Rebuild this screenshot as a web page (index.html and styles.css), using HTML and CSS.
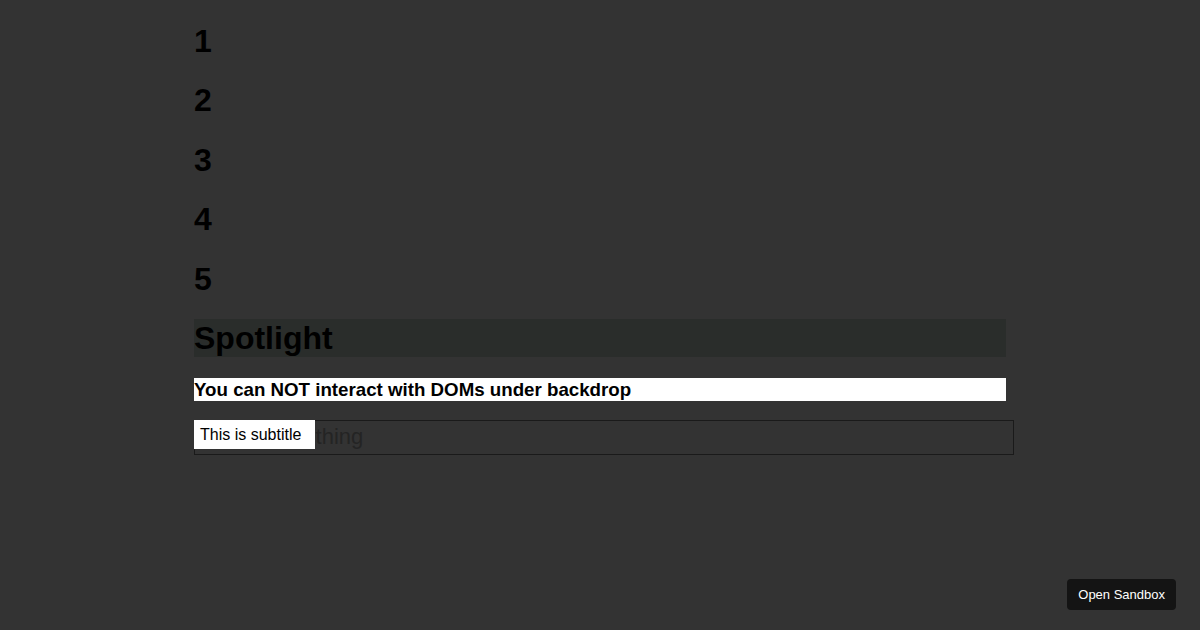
FILE: index.html
```html
<!DOCTYPE html>
<html>
<head>
<meta charset="utf-8">
<link rel="stylesheet" href="styles.css">
</head>
<body>
<div class="page">
  <h1 class="num">1</h1>
  <h1 class="num">2</h1>
  <h1 class="num">3</h1>
  <h1 class="num">4</h1>
  <h1 class="num">5</h1>
  <h1 class="spot">Spotlight</h1>
  <h3 class="note">You can NOT interact with DOMs under backdrop</h3>
  <div class="field">
    <input class="input" type="text" placeholder="Type something">
    <div class="subtitle">This is subtitle</div>
  </div>
</div>
<button class="sandbox">Open Sandbox</button>
</body>
</html>
```

FILE: styles.css
```css
html, body {
  background: #333333;
}
body {
  margin: 0;
  font-family: "Liberation Sans", Arial, sans-serif;
  color: #000;
}
.page {
  width: 812px;
  margin: 0 auto;
  padding-top: 0.1px;
}
h1 {
  font-size: 32px;
  line-height: 38px;
  margin: 21.5px 0;
  font-weight: bold;
}
.num {
  color: #000;
}
.spot {
  background: #2a2d2b;
  color: #000;
  margin-bottom: 21px;
}
.note {
  font-size: 18.72px;
  line-height: 23px;
  margin: 18.72px 0;
  background: #ffffff;
  color: #000;
  font-weight: bold;
}
.field {
  position: relative;
}
.input {
  display: block;
  box-sizing: border-box;
  width: 820px;
  height: 35px;
  margin: 0;
  padding: 4px 3px 4px 13px;
  border: 1px solid #1a1a1a;
  background: #333333;
  font-family: "Liberation Sans", Arial, sans-serif;
  font-size: 22px;
  color: #242424;
  outline: none;
}
.input::placeholder {
  color: #242424;
}
.subtitle {
  position: absolute;
  left: 0;
  top: 0;
  background: #ffffff;
  color: #000;
  font-size: 16px;
  line-height: 19px;
  padding: 5px 14px 5px 6px;
}
.sandbox {
  position: fixed;
  right: 24px;
  bottom: 20px;
  height: 31px;
  padding: 0 11px;
  background: #141414;
  color: #ffffff;
  border: none;
  border-radius: 4px;
  font-family: "Liberation Sans", Arial, sans-serif;
  font-size: 13px;
}
```
